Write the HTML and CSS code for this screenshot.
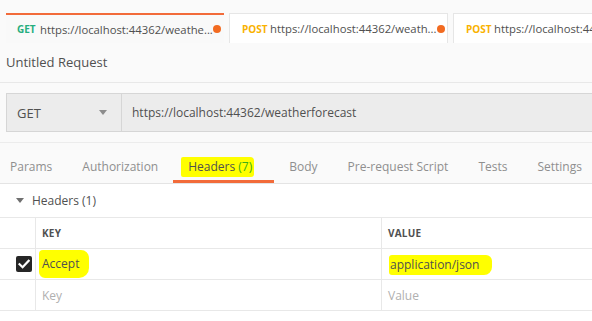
FILE: index.html
```html
<!DOCTYPE html>
<html>
<head>
<meta charset="utf-8">
<link rel="stylesheet" href="styles.css">
</head>
<body>
<div class="tabstrip">
  <div class="tab active"><span class="m get">GET</span><span class="turl">https://localhost:44362/weathe...</span><span class="dot"></span></div>
  <div class="tab"><span class="m post">POST</span><span class="turl">https://localhost:44362/weath...</span><span class="dot"></span></div>
  <div class="tab last"><span class="m post">POST</span><span class="turl">https://localhost:44</span></div>
</div>
<div class="title">Untitled Request</div>
<div class="urlbar">
  <div class="method"><span>GET</span><span class="caret"></span></div>
  <div class="url">https://localhost:44362/weatherforecast</div>
</div>
<div class="rtabs">
  <div class="rtab">Params</div>
  <div class="rtab">Authorization</div>
  <div class="rtab on"><span class="hl hl-tab">Headers <span class="cnt">(7)</span></span></div>
  <div class="rtab">Body</div>
  <div class="rtab">Pre-request Script</div>
  <div class="rtab">Tests</div>
  <div class="rtab">Settings</div>
</div>
<div class="section"><span class="tri"></span>Headers (1)</div>
<div class="table">
  <div class="row head">
    <div class="c0"></div>
    <div class="c1">KEY</div>
    <div class="c2">VALUE</div>
  </div>
  <div class="row">
    <div class="c0"><span class="cb"><svg width="12" height="10" viewBox="0 0 12 10"><path d="M1.5 5.2 L4.6 8.2 L10.6 1.8" fill="none" stroke="#fff" stroke-width="2.2" stroke-linecap="square"/></svg></span></div>
    <div class="c1"><span class="hl hl-key">Accept</span></div>
    <div class="c2"><span class="hl hl-val">application/json</span></div>
  </div>
  <div class="row">
    <div class="c0"></div>
    <div class="c1 ph">Key</div>
    <div class="c2 ph">Value</div>
  </div>
</div>
</body>
</html>
```
FILE: styles.css
```css
html, body {
  margin: 0;
  padding: 0;
}
body {
  width: 592px;
  height: 321px;
  overflow: hidden;
  background: #fafafa;
  font-family: "Open Sans", "Liberation Sans", sans-serif;
  font-size: 12px;
  color: #505050;
}
.tabstrip {
  display: flex;
  gap: 5px;
  padding: 13px 0 0 6px;
  height: 30px;
  white-space: nowrap;
  overflow: hidden;
}
.tab {
  box-sizing: border-box;
  width: 219px;
  height: 30px;
  flex: none;
  display: flex;
  align-items: center;
  padding: 0 0 0 12px;
  background: #fff;
  border: 1px solid #e6e6e6;
  border-bottom: none;
}
.tab.last {
  width: 139px;
  border-right: none;
}
.tab.active {
  width: 218px;
  background: #f9f9f9;
  border: none;
  border-top: 2px solid #f26b3a;
  padding-left: 11px;
}
.m {
  font-size: 10px;
  font-weight: 700;
  width: 23px;
  flex: none;
}
.m.post { width: 28px; }
.get { color: #26ae7e; }
.post { color: #f9b200; }
.turl {
  color: #505050;
  font-size: 11.3px;
}
.dot {
  width: 8px;
  height: 8px;
  border-radius: 50%;
  background: #f26b21;
  margin-left: auto;
  margin-right: 5px;
  flex: none;
}
.tab:nth-child(2) .dot { margin-right: 6px; }
.title {
  height: 39px;
  line-height: 39px;
  padding-left: 6px;
  font-size: 13px;
  border-bottom: 1px solid #e8e8e8;
}
.urlbar {
  margin: 10px 0 0 6px;
  width: 600px;
  height: 39px;
  box-sizing: border-box;
  border: 1px solid #d6d6d6;
  background: #ececec;
  display: flex;
  align-items: stretch;
}
.method {
  width: 115px;
  box-sizing: border-box;
  border-right: 1px solid #d6d6d6;
  display: flex;
  align-items: center;
  padding-left: 10px;
  font-size: 13px;
  color: #505050;
}
.caret {
  margin-left: auto;
  margin-right: 14px;
  width: 0;
  height: 0;
  border-left: 4px solid transparent;
  border-right: 4px solid transparent;
  border-top: 5px solid #8c8c8c;
}
.url {
  display: flex;
  align-items: center;
  padding-left: 10px;
  font-size: 12px;
  color: #505050;
}
.rtabs {
  margin-top: 10px;
  border-top: 1px solid #ececec;
  border-bottom: 1px solid #e4e4e4;
  height: 40px;
  display: flex;
  white-space: nowrap;
}
.rtab {
  padding: 7px 15px 0;
  display: flex;
  align-items: center;
  color: #8f8f8f;
  font-size: 12px;
}
.rtab:first-child { padding-left: 10px; }
.rtab.on {
  color: #505050;
  padding-right: 20px;
  box-shadow: inset 0 -3px 0 #f26b3a;
}
.cnt { color: #3cae19; }
.hl {
  background: #ffff00;
  display: inline-block;
}
.hl-tab {
  margin-left: -7px;
  padding: 2px 2px 2px 7px;
  border-radius: 2px 4px 3px 2px;
  line-height: 16px;
}
.section {
  height: 33px;
  background: #fff;
  display: flex;
  align-items: center;
  padding-left: 16px;
  font-size: 12px;
  color: #505050;
}
.tri {
  width: 0;
  height: 0;
  border-left: 4px solid transparent;
  border-right: 4px solid transparent;
  border-top: 5px solid #707070;
  margin-right: 8px;
}
.table {
  background: #fff;
  border-top: 1px solid #e8e8e8;
  height: 200px;
}
.row {
  display: grid;
  grid-template-columns: 35px 346px 1fr;
  height: 30px;
  border-bottom: 1px solid #e8e8e8;
}
.row > div {
  display: flex;
  align-items: center;
}
.c1, .c2 {
  border-left: 1px solid #e8e8e8;
  padding-left: 6px;
  font-size: 12px;
}
.head .c1, .head .c2 {
  font-size: 10px;
  font-weight: 700;
  color: #505050;
  letter-spacing: 0.2px;
}
.c0 { justify-content: flex-end; padding-right: 3px; }
.cb {
  width: 16px;
  height: 16px;
  background: #262626;
  border-radius: 2px;
  display: flex;
  align-items: center;
  justify-content: center;
}
.hl-key {
  margin-left: -3px;
  padding: 6px 10px 6px 3px;
  border-radius: 4px 8px 10px 6px;
  line-height: 16px;
}
.hl-val {
  margin-left: 1px;
  padding: 2px 13px 2px 1px;
  border-radius: 3px 6px 8px 3px;
  line-height: 16px;
  margin-top: 2px;
}
.ph { color: #b0b0b0; }
```
